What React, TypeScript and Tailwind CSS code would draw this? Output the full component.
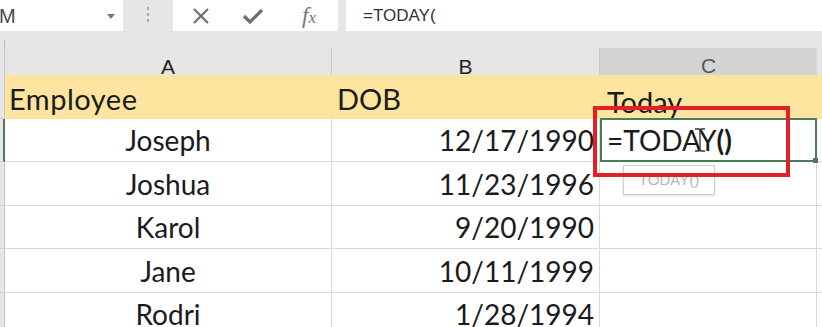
import React from 'react';

const rows = [
  { name: 'Joseph', dob: '12/17/1990' },
  { name: 'Joshua', dob: '11/23/1996' },
  { name: 'Karol', dob: '9/20/1990' },
  { name: 'Jane', dob: '10/11/1999' },
  { name: 'Rodri', dob: '1/28/1994' },
];

const cell = "font-['Lato',sans-serif] text-[28px] text-[#1b1b1b] leading-none flex items-center";

export default function App() {
  return (
    <div className="relative w-[822px] h-[327px] overflow-hidden bg-white">
      {/* Formula bar */}
      <div className="flex h-[31px] bg-[#e6e6e6] font-['Liberation_Sans',Arial,sans-serif]">
        <div className="w-[123px] bg-white flex items-center justify-between pr-[8px]">
          <span className="text-[20px] text-[#4a4a4a] -ml-[1px]">M</span>
          <svg width="8" height="5" viewBox="0 0 8 5" className="mt-[1px]">
            <path d="M0 0h8L4 5z" fill="#777" />
          </svg>
        </div>
        <div className="w-[50px] flex items-center justify-center">
          <div className="flex flex-col gap-[3px] -mt-[2px]">
            <span className="w-[2px] h-[3px] bg-[#aaa]" />
            <span className="w-[2px] h-[3px] bg-[#aaa]" />
            <span className="w-[2px] h-[3px] bg-[#aaa]" />
          </div>
        </div>
        <div className="w-[165px] bg-white flex items-center pl-[19px] gap-[32px]">
          <svg width="18" height="18" viewBox="0 0 18 18">
            <path d="M2 2L16 16M16 2L2 16" stroke="#6e6e6e" strokeWidth="2.2" />
          </svg>
          <svg width="22" height="18" viewBox="0 0 22 18">
            <path d="M2 9l6 6L20 3" stroke="#6e6e6e" strokeWidth="3.2" fill="none" />
          </svg>
          <span className="ml-[6px] font-['Liberation_Serif',serif] italic text-[23px] text-[#777] leading-none">
            f<span className="text-[17px]">x</span>
          </span>
        </div>
        <div className="w-[8px]" />
        <div className="flex-1 bg-white flex items-center pl-[17px]">
          <span className="text-[17px] text-[#333]">=TODAY(</span>
        </div>
      </div>

      {/* Gap strip + column headers */}
      <div className="bg-[#e6e6e6] h-[17px] relative">
        <div className="absolute left-[4px] top-[9px] w-px h-[8px] bg-[#bbb]" />
      </div>
      <div className="grid grid-cols-[5px_327px_268px_217px_5px] h-[27px] bg-[#e6e6e6] font-['Liberation_Sans',Arial,sans-serif] text-[21px] text-[#222]">
        <div className="border-r border-[#c8c8c8]" />
        <div className="flex items-center justify-center border-r border-[#c8c8c8] pt-[2px]">A</div>
        <div className="flex items-center justify-center border-r border-[#c8c8c8] pt-[2px]">B</div>
        <div className="flex items-center justify-center bg-[#d4d4d4] border-b-2 border-[#4c7a5c] text-[#555] pt-[2px]">C</div>
        <div />
      </div>

      {/* Sheet */}
      <div className="grid grid-cols-[5px_327px_268px_217px_5px] grid-rows-[44px_43px_44px_43px_44px_43px]">
        <div className="bg-[#e6e6e6] border-r border-[#c8c8c8] border-b border-b-[#d0d0d0]" />
        <div className={`${cell} bg-[#fde49f] pl-[4px] pt-[2px] text-[29px] tracking-[0.5px]`}>Employee</div>
        <div className={`${cell} bg-[#fde49f] pl-[5px] pt-[2px] text-[29px]`}>DOB</div>
        <div className={`${cell} bg-[#fde49f] pl-[7px] pt-[8px] text-[29px]`}>Today</div>
        <div className="bg-[#fde49f]" />

        {rows.map((r, i) => (
          <React.Fragment key={r.name}>
            <div
              className={`bg-[#e6e6e6] border-r border-b border-b-[#d0d0d0] ${
                i === 0 ? 'border-r-2 border-r-[#4c7a5c]' : 'border-r-[#c8c8c8]'
              }`}
            />
            <div className={`${cell} justify-center border-r border-b border-[#dadada]`}>{r.name}</div>
            <div className={`${cell} justify-end pr-[5px] border-r border-b border-[#dadada]`}>{r.dob}</div>
            {i === 0 ? (
              <div className={`${cell} relative border-2 border-[#4c7a5c] pl-[5px] -mt-px`}>
                =TODAY<span className="font-bold">()</span>
                <span className="absolute -right-[3px] -bottom-[3px] w-[5px] h-[5px] bg-[#4c7a5c]" />
              </div>
            ) : (
              <div className="border-r border-b border-[#dadada]" />
            )}
            <div className="border-b border-[#dadada]" />
          </React.Fragment>
        ))}
      </div>

      {/* Autocomplete tooltip */}
      <div className="absolute left-[623px] top-[165px] w-[92px] h-[30px] bg-white border border-[#cfcfcf] shadow-[0_1px_2px_rgba(0,0,0,0.15)] flex items-center justify-center font-['Liberation_Sans',Arial,sans-serif] text-[15px] text-[#b5b5b5]">
        TODAY()
      </div>

      {/* I-beam cursor */}
      <svg className="absolute left-[694px] top-[128px]" width="12" height="24" viewBox="0 0 12 24">
        <path d="M1 1h4l1 1 1-1h4M6 2v20M1 23h4l1-1 1 1h4" stroke="#333" strokeWidth="1.3" fill="none" />
      </svg>

      {/* Red highlight box */}
      <div className="absolute left-[593px] top-[106px] w-[197px] h-[71px] border-[4px] border-[#e61f26]" />
    </div>
  );
}
